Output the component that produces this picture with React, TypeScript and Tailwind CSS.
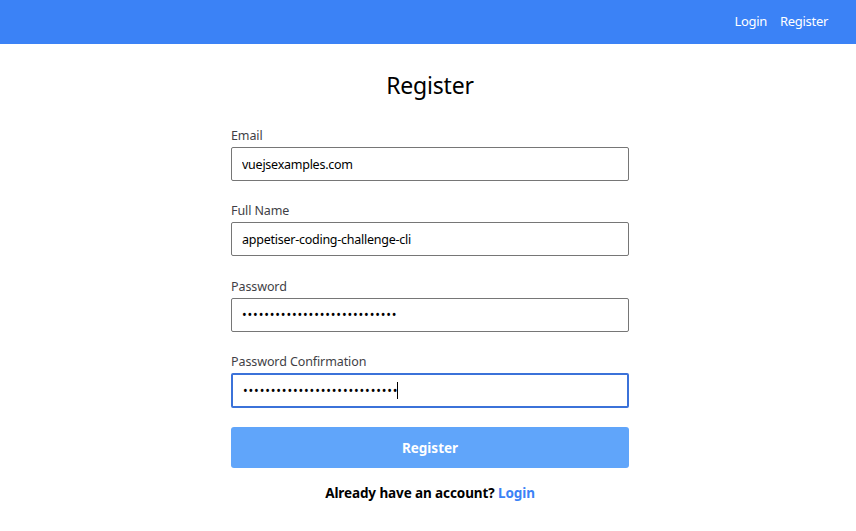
import { useState } from "react"

const font = { fontFamily: '"Noto Sans", "Open Sans", sans-serif' }

function Field({
  label,
  value,
  type = "text",
  focused = false,
}: {
  label: string
  value: string
  type?: string
  focused?: boolean
}) {
  const [val, setVal] = useState(value)
  const isPassword = type === "password"
  return (
    <div className="flex flex-col">
      <label className="text-[12.5px] leading-[18px] text-[#3f3f46] mb-[2px] tracking-[-0.1px]">{label}</label>
      <div className="relative">
        <input
          type={type}
          value={val}
          onChange={(e) => setVal(e.target.value)}
          className={`h-[34px] w-full px-[10px] text-[12.5px] text-black rounded-[2px] outline-none bg-white ${
            isPassword ? "tracking-[0.85px]" : "tracking-[-0.25px]"
          } ${focused ? "border-2 border-[#3b72d9] px-[9px] h-[35px]" : "border border-[#767676]"}`}
          style={font}
        />
        {focused && <span className="absolute left-[166px] top-[9px] h-[17px] w-px bg-black" />}
      </div>
    </div>
  )
}

export default function App() {
  return (
    <div className="min-h-screen bg-white" style={font}>
      <header className="h-[44px] bg-[#3b82f6] flex items-center justify-end pr-[28px] gap-[13px] text-white text-[13px] tracking-[-0.3px]">
        <a href="#">Login</a>
        <a href="#">Register</a>
      </header>

      <div className="flex justify-center pl-[4px]">
        <div className="w-[398px] flex flex-col">
          <h1 className="text-center text-[23px] text-black mt-[26px] leading-[30px] tracking-[-0.2px]">Register</h1>

          <form className="flex flex-col gap-[21.3px] mt-[27px]" onSubmit={(e) => e.preventDefault()}>
            <Field label="Email" value="vuejsexamples.com" />
            <Field label="Full Name" value="appetiser-coding-challenge-cli" />
            <Field label="Password" type="password" value="appetisercodingchallengecli1" />
            <Field label="Password Confirmation" type="password" value="appetisercodingchallengecli1" focused />

            <button
              type="submit"
              className="mt-[-2px] h-[41px] w-full rounded-[3px] bg-[#60a5fa] text-white font-bold text-[13.5px]"
            >
              Register
            </button>
          </form>

          <p className="text-center text-[13.5px] font-bold text-black mt-[15px] tracking-[-0.1px]">
            Already have an account? <a href="#" className="text-[#3b82f6]">Login</a>
          </p>
        </div>
      </div>
    </div>
  )
}
